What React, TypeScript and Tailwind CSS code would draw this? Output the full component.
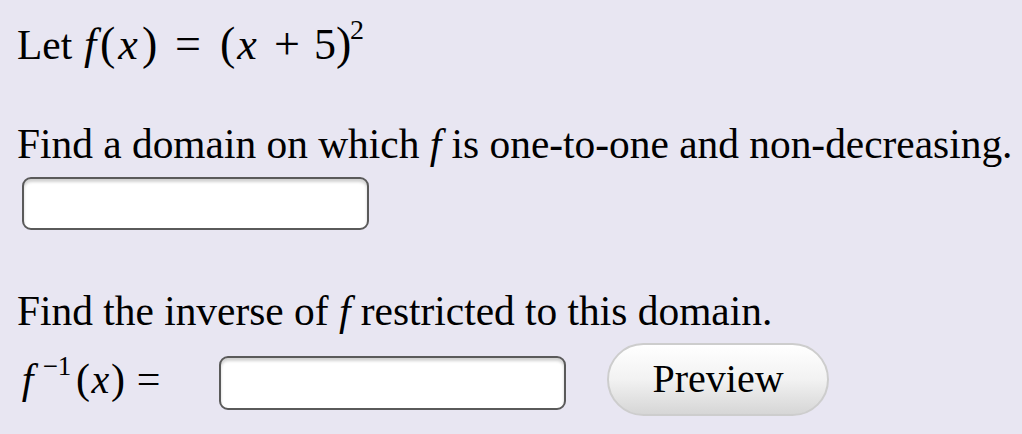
import React from "react";

const serif = { fontFamily: '"Liberation Serif", "Times New Roman", serif' };

function G({
  w,
  children,
  cls = "",
}: {
  w: string;
  children: React.ReactNode;
  cls?: string;
}) {
  return <span className={`inline-block text-center ${w} ${cls}`}>{children}</span>;
}

export default function App() {
  return (
    <div
      className="w-[1022px] h-[434px] bg-[#e8e6f2] text-black text-[41.4px] leading-none overflow-hidden"
      style={serif}
    >
      <div className="pl-[17px] pt-[21px] flex flex-col">
        {/* Line 1 */}
        <div className="flex items-baseline h-[41px] whitespace-nowrap">
          <span className="w-[63px]">Let</span>
          <G w="w-[20px]" cls="italic text-[44px]">f</G>
          <G w="w-[14px]" cls="text-[46px]">(</G>
          <G w="w-[28px]" cls="italic text-[44px]">x</G>
          <G w="w-[14px]" cls="text-[46px]">)</G>
          <G w="w-[28px]" cls="ml-[18px] text-[46px]">=</G>
          <G w="w-[13px]" cls="ml-[18px] text-[46px]">(</G>
          <G w="w-[28px]" cls="italic text-[44px]">x</G>
          <G w="w-[26px]" cls="ml-[13px] text-[46px]">+</G>
          <G w="w-[18px]" cls="ml-[14px] text-[44px]">5</G>
          <G w="w-[14px]" cls="ml-[4px] text-[46px]">)</G>
          <G w="w-[14px]" cls="text-[28px] relative -top-[20px]">2</G>
        </div>

        {/* Line 2 */}
        <div className="mt-[62px] h-[41px] whitespace-nowrap">
          Find a domain on which <span className="italic">f</span> is one-to-one and non-decreasing.
        </div>
        <div className="mt-[12px] pl-[5px]">
          <div className="w-[347px] h-[53px] bg-white border-2 border-[#5a5a5a] rounded-[9px] shadow-[inset_0_3px_3px_rgba(0,0,0,0.18)]" />
        </div>

        {/* Line 3 */}
        <div className="mt-[61px] h-[41px] whitespace-nowrap">
          Find the inverse of <span className="italic">f</span> restricted to this domain.
        </div>

        {/* Last row */}
        <div className="mt-[11px] flex items-start">
          <div className="mt-[15px] flex items-baseline w-[202px] whitespace-nowrap">
            <G w="w-[21px]" cls="italic text-[42px]">f</G>
            <G w="w-[38px]" cls="text-[27px] relative -top-[18px]">−1</G>
            <G w="w-[14px]" cls="text-[42px]">(</G>
            <G w="w-[21px]" cls="italic text-[40px]">x</G>
            <G w="w-[13px]" cls="text-[42px]">)</G>
            <G w="w-[25px]" cls="ml-[12px] text-[42px]">=</G>
          </div>
          <div className="mt-[13px] w-[347px] h-[54px] bg-white border-2 border-[#5a5a5a] rounded-[9px] shadow-[inset_0_3px_3px_rgba(0,0,0,0.18)]" />
          <button
            className="ml-[41px] w-[222px] h-[73px] rounded-full border-2 border-[#cdcdcd] bg-gradient-to-b from-[#ffffff] via-[#f2f2f2] to-[#d6d6d6] text-[40px] leading-none text-black pb-[2px]"
            style={serif}
          >
            Preview
          </button>
        </div>
      </div>
    </div>
  );
}
